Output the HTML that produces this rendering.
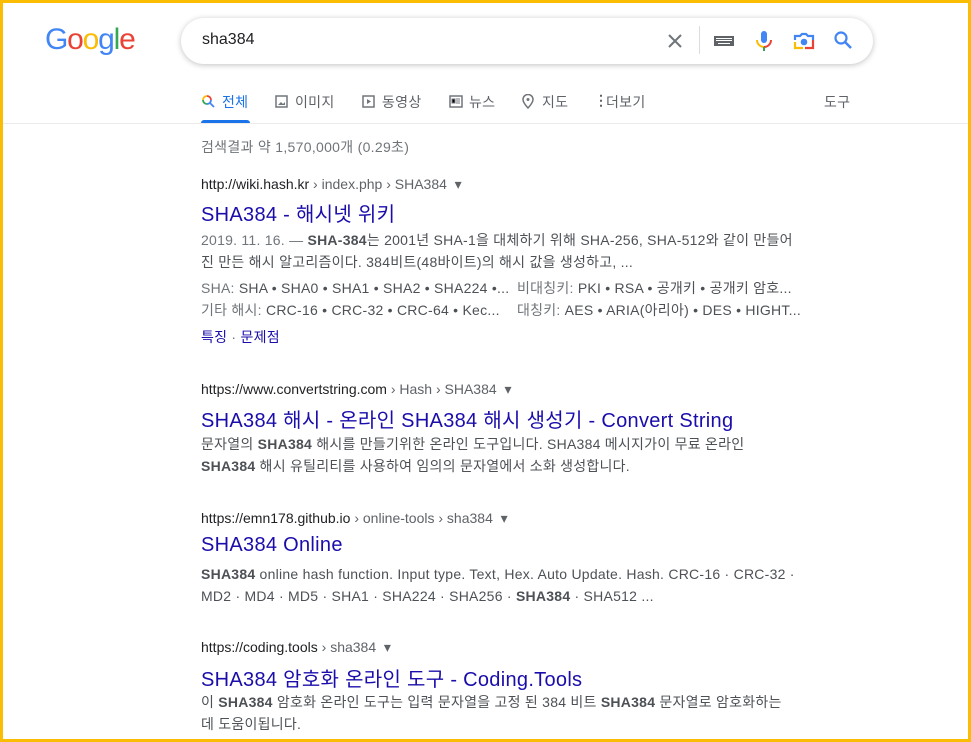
<!DOCTYPE html>
<html><head><meta charset="utf-8"><style>
*{margin:0;padding:0;box-sizing:border-box}
body{width:971px;height:742px;overflow:hidden;background:#fff;font-family:"Liberation Sans","Noto Sans CJK KR",sans-serif;position:relative}
.frame{position:absolute;left:0;top:0;width:971px;height:742px;border:3px solid #fbbc04;z-index:10;pointer-events:none}
.abs{position:absolute;white-space:nowrap}
.logo{left:45px;top:23px;font-size:30px;letter-spacing:-1.2px;font-family:"Liberation Sans",sans-serif}
.box{left:181px;top:18px;width:692px;height:46px;border-radius:23px;box-shadow:0 1px 6px rgba(32,33,36,.28)}
.tab{top:92px;font-size:14px;color:#5f6368;letter-spacing:0.3px}
.url{font-size:14px;color:#202124}
.url span{color:#5f6368}
.t{font-size:20px;color:#1a0dab;letter-spacing:0.3px}
.s{font-size:14px;color:#4d5156;line-height:22px;letter-spacing:0.25px}
.s b{color:#4d5156}
</style></head><body>
<div class="frame"></div>
<div class="abs logo"><span style="color:#4285f4">G</span><span style="color:#ea4335">o</span><span style="color:#fbbc05">o</span><span style="color:#4285f4">g</span><span style="color:#34a853">l</span><span style="color:#ea4335">e</span></div>
<div class="abs box"></div>
<div class="abs" style="left:202px;top:31px;font-size:16px;color:#202124">sha384</div>
<svg class="abs" style="left:665px;top:31px" width="20" height="20" viewBox="0 0 20 20"><path d="M4 4L16 16M16 4L4 16" stroke="#70757a" stroke-width="2"/></svg>
<div class="abs" style="left:699px;top:26px;width:1px;height:28px;background:#dadce0"></div>
<svg class="abs" style="left:714px;top:34px" width="20" height="14"><rect x="0" y="2" width="20" height="10" fill="#5f6368"/><g fill="#fff"><rect x="2" y="4" width="16" height="1"/><rect x="2" y="6" width="16" height="1"/><rect x="4" y="9" width="12" height="1"/></g></svg>
<svg class="abs" style="left:754px;top:29px" width="20" height="24" viewBox="0 0 20 24"><rect x="7" y="2" width="6" height="12" rx="3" fill="#4285f4"/><path d="M3 11a7 7 0 0 0 7 7" stroke="#fbbc05" stroke-width="2" fill="none"/><path d="M17 11a7 7 0 0 1-7 7" stroke="#ea4335" stroke-width="2" fill="none"/><path d="M10 18v4" stroke="#34a853" stroke-width="2"/></svg>
<svg class="abs" style="left:793px;top:31px" width="22" height="20" viewBox="0 0 22 20"><path d="M2 9V5h5l2-2h4l2 2h5v4" stroke="#4285f4" stroke-width="2.2" fill="none"/><path d="M2 11v6h8" stroke="#fbbc05" stroke-width="2.2" fill="none"/><path d="M12 17h8v-8" stroke="#ea4335" stroke-width="2.2" fill="none"/><circle cx="11" cy="11" r="3.3" fill="#4285f4"/></svg>
<svg class="abs" style="left:833px;top:30px" width="20" height="20" viewBox="0 0 20 20"><circle cx="8" cy="8" r="5.5" stroke="#4285f4" stroke-width="2.2" fill="none"/><path d="M12 12l6 6" stroke="#4285f4" stroke-width="2.5"/></svg>

<svg class="abs" style="left:202px;top:95px" width="13" height="13" viewBox="0 0 13 13"><path d="M5 1a4 4 0 0 1 4 4" stroke="#ea4335" stroke-width="1.8" fill="none"/><path d="M9 5a4 4 0 0 1-4 4" stroke="#4285f4" stroke-width="1.8" fill="none"/><path d="M5 9a4 4 0 0 1-4-4" stroke="#34a853" stroke-width="1.8" fill="none"/><path d="M1 5a4 4 0 0 1 4-4" stroke="#fbbc05" stroke-width="1.8" fill="none"/><path d="M8 8l4 4" stroke="#4285f4" stroke-width="1.8"/></svg>
<div class="abs tab" style="left:222px;color:#1a73e8">전체</div>
<div class="abs" style="left:201px;top:120px;width:49px;height:3px;background:#1a73e8;border-radius:3px 3px 0 0"></div>
<svg class="abs" style="left:275px;top:95px" width="13" height="13"><rect x="1" y="1" width="11" height="11" fill="none" stroke="#70757a" stroke-width="1.5"/><path d="M3 10l3-3 2 2 2-2v3z" fill="#70757a"/></svg>
<div class="abs tab" style="left:295px">이미지</div>
<svg class="abs" style="left:362px;top:95px" width="13" height="13"><rect x="1" y="1" width="11" height="11" fill="none" stroke="#70757a" stroke-width="1.5"/><path d="M5 4l4 2.5-4 2.5z" fill="#70757a"/></svg>
<div class="abs tab" style="left:382px">동영상</div>
<svg class="abs" style="left:449px;top:95px" width="14" height="13"><rect x="1" y="1" width="12" height="11" fill="none" stroke="#70757a" stroke-width="1.5"/><path d="M3 4h3v4H3zM7 4h4M7 6h4M7 8h4" stroke="#70757a" stroke-width="1"/></svg>
<div class="abs tab" style="left:469px">뉴스</div>
<svg class="abs" style="left:522px;top:94px" width="12" height="15" viewBox="0 0 12 15"><path d="M6 14C6 14 1 8.5 1 5.5a5 5 0 0 1 10 0C11 8.5 6 14 6 14z" fill="none" stroke="#70757a" stroke-width="1.5"/><circle cx="6" cy="5.5" r="1.5" fill="#70757a"/></svg>
<div class="abs tab" style="left:542px">지도</div>
<div class="abs tab" style="left:594px;font-weight:bold">⋮</div>
<div class="abs tab" style="left:606px">더보기</div>
<div class="abs tab" style="left:824px">도구</div>
<div class="abs" style="left:3px;top:123px;width:965px;height:1px;background:#ebebeb"></div>

<div class="abs" style="left:201px;top:137px;font-size:14px;color:#70757a;letter-spacing:0.3px">검색결과 약 1,570,000개 (0.29초)</div>

<div class="abs url" style="left:201px;top:176px">http://wiki.hash.kr <span>› index.php › SHA384 &nbsp;▾</span></div>
<div class="abs t" style="left:201px;top:198px">SHA384 - 해시넷 위키</div>
<div class="abs s" style="left:201px;top:229px"><span style="color:#70757a">2019. 11. 16. — </span><b>SHA-384</b>는 2001년 SHA-1을 대체하기 위해 SHA-256, SHA-512와 같이 만들어<br>진 만든 해시 알고리즘이다. 384비트(48바이트)의 해시 값을 생성하고, ...</div>
<div class="abs s" style="left:201px;top:277px;color:#70757a">SHA: <span style="color:#4d5156">SHA • SHA0 • SHA1 • SHA2 • SHA224 •...</span><br>기타 해시: <span style="color:#4d5156">CRC-16 • CRC-32 • CRC-64 • Kec...</span></div>
<div class="abs s" style="left:517px;top:277px;color:#70757a">비대칭키: <span style="color:#4d5156">PKI • RSA • 공개키 • 공개키 암호...</span><br>대칭키: <span style="color:#4d5156">AES • ARIA(아리아) • DES • HIGHT...</span></div>
<div class="abs s" style="left:201px;top:326px;color:#1a0dab">특징 <span style="color:#70757a">·</span> 문제점</div>

<div class="abs url" style="left:201px;top:381px">https://www.convertstring.com <span>› Hash › SHA384 &nbsp;▾</span></div>
<div class="abs t" style="left:201px;top:404px">SHA384 해시 - 온라인 SHA384 해시 생성기 - Convert String</div>
<div class="abs s" style="left:201px;top:433px">문자열의 <b>SHA384</b> 해시를 만들기위한 온라인 도구입니다. SHA384 메시지가이 무료 온라인<br><b>SHA384</b> 해시 유틸리티를 사용하여 임의의 문자열에서 소화 생성합니다.</div>

<div class="abs url" style="left:201px;top:510px">https://emn178.github.io <span>› online-tools › sha384 &nbsp;▾</span></div>
<div class="abs t" style="left:201px;top:534px">SHA384 Online</div>
<div class="abs s" style="left:201px;top:563px"><b>SHA384</b> online hash function. Input type. Text, Hex. Auto Update. Hash. CRC-16 · CRC-32 ·<br>MD2 · MD4 · MD5 · SHA1 · SHA224 · SHA256 · <b>SHA384</b> · SHA512 ...</div>

<div class="abs url" style="left:201px;top:639px">https://coding.tools <span>› sha384 &nbsp;▾</span></div>
<div class="abs t" style="left:201px;top:663px">SHA384 암호화 온라인 도구 - Coding.Tools</div>
<div class="abs s" style="left:201px;top:691px">이 <b>SHA384</b> 암호화 온라인 도구는 입력 문자열을 고정 된 384 비트 <b>SHA384</b> 문자열로 암호화하는<br>데 도움이됩니다.</div>
</body></html>
